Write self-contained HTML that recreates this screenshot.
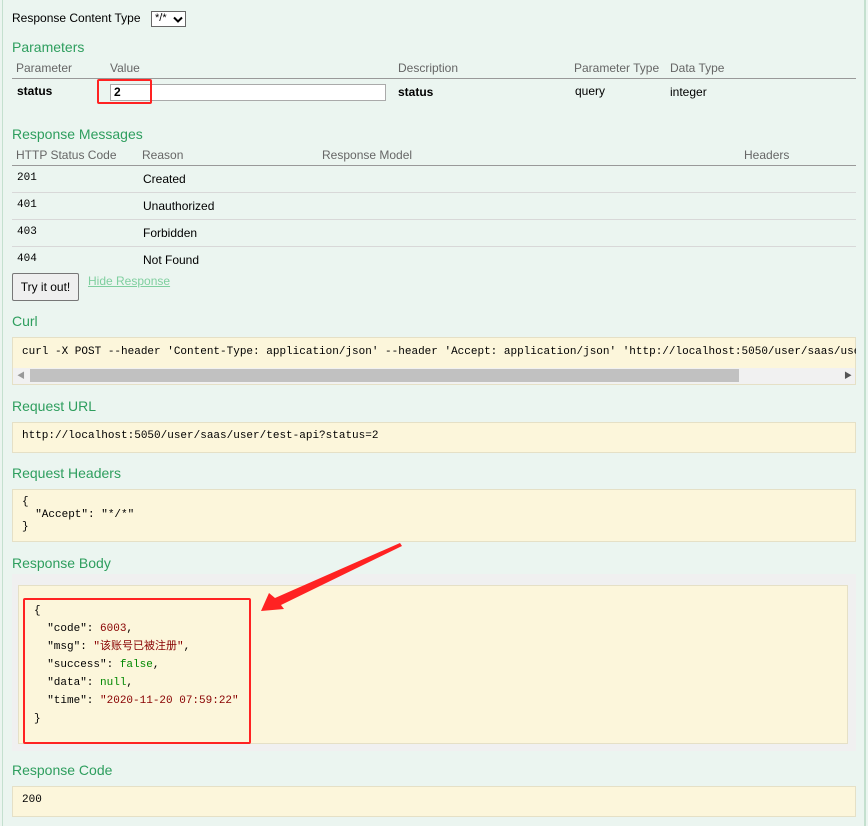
<!DOCTYPE html>
<html><head><meta charset="utf-8"><style>
*{margin:0;padding:0;box-sizing:border-box}
body{width:868px;height:826px;background:#ebf5f0;font-family:"Liberation Sans","Noto Sans CJK SC",sans-serif;font-size:12px;color:#000;position:relative;overflow:hidden}
.a{position:absolute;white-space:nowrap}
.h{color:#2e9e5e;font-size:14px}
.g{color:#666}
.m{font-family:"Liberation Mono","Noto Sans CJK SC",monospace;font-size:11px}
.box{position:absolute;left:12px;width:844px;background:#fcf6db;border:1px solid #e5e0c6}
.ln{position:absolute;left:12px;width:844px;height:1px;background:#d8d8d8}
</style></head><body>
<div class="a" style="left:2px;top:0;width:1px;height:826px;background:#c4e0cf"></div>
<div class="a" style="left:864px;top:0;width:2px;height:826px;background:#c4e0cf"></div>

<div class="a" style="left:12px;top:11px">Response Content Type</div>
<div class="a" style="left:151px;top:11px;width:35px;height:16px;border:1px solid #666;background:#fff;font-size:11px;padding-left:3px;line-height:13px">*/*<svg style="position:absolute;left:21px;top:4px" width="10" height="7"><path d="M1 1.5 L5 5.5 L9 1.5" stroke="#000" stroke-width="2" fill="none"/></svg></div>

<div class="a h" style="left:12px;top:39px">Parameters</div>
<div class="a g" style="left:16px;top:61px">Parameter</div>
<div class="a g" style="left:110px;top:61px">Value</div>
<div class="a g" style="left:398px;top:61px">Description</div>
<div class="a g" style="left:574px;top:61px">Parameter Type</div>
<div class="a g" style="left:670px;top:61px">Data Type</div>
<div class="ln" style="top:78px;background:#999"></div>
<div class="a" style="left:17px;top:84px;font-weight:bold">status</div>
<div class="a" style="left:110px;top:84px;width:276px;height:17px;background:#fff;border:1px solid #aaa;font-weight:bold;padding-left:3px;line-height:15px">2</div>
<div class="a" style="left:97px;top:79px;width:55px;height:25px;border:2px solid #f22;border-radius:2px"></div>
<div class="a" style="left:398px;top:85px;font-weight:bold">status</div>
<div class="a" style="left:575px;top:84px">query</div>
<div class="a" style="left:670px;top:85px">integer</div>

<div class="a h" style="left:12px;top:126px">Response Messages</div>
<div class="a g" style="left:16px;top:148px">HTTP Status Code</div>
<div class="a g" style="left:142px;top:148px">Reason</div>
<div class="a g" style="left:322px;top:148px">Response Model</div>
<div class="a g" style="left:744px;top:148px">Headers</div>
<div class="ln" style="top:165px;background:#999"></div>
<div class="a m" style="left:17px;top:172px">201</div><div class="a" style="left:143px;top:172px">Created</div>
<div class="ln" style="top:192px"></div>
<div class="a m" style="left:17px;top:199px">401</div><div class="a" style="left:143px;top:199px">Unauthorized</div>
<div class="ln" style="top:219px"></div>
<div class="a m" style="left:17px;top:226px">403</div><div class="a" style="left:143px;top:226px">Forbidden</div>
<div class="ln" style="top:246px"></div>
<div class="a m" style="left:17px;top:253px">404</div><div class="a" style="left:143px;top:253px">Not Found</div>

<div class="a" style="left:12px;top:273px;width:67px;height:28px;background:#efefef;border:1px solid #777;border-radius:2px;text-align:center;line-height:26px">Try it out!</div>
<div class="a" style="left:88px;top:274px;color:#7fcf9f;text-decoration:underline">Hide Response</div>

<div class="a h" style="left:12px;top:313px">Curl</div>
<div class="box" style="top:337px;height:48px"></div>
<div class="a m" style="left:22px;top:346px;width:834px;overflow:hidden">curl -X POST --header 'Content-Type: application/json' --header 'Accept: application/json' 'http://localhost:5050/user/saas/user/test-api?status=2'</div>
<div class="a" style="left:13px;top:368px;width:842px;height:16px;background:#f1f1f1"></div>
<div class="a" style="left:30px;top:369px;width:709px;height:13px;background:#c1c1c1"></div>
<div class="a" style="left:17px;top:370px;font-size:8px;color:#999">&#9664;</div>
<div class="a" style="left:844px;top:370px;font-size:8px;color:#555">&#9654;</div>

<div class="a h" style="left:12px;top:398px">Request URL</div>
<div class="box" style="top:422px;height:31px"></div>
<div class="a m" style="left:22px;top:430px">http://localhost:5050/user/saas/user/test-api?status=2</div>

<div class="a h" style="left:12px;top:465px">Request Headers</div>
<div class="box" style="top:489px;height:53px"></div>
<div class="a m" style="left:22px;top:496px;line-height:12.5px;white-space:pre">{
  "Accept": "*/*"
}</div>

<div class="a h" style="left:12px;top:555px">Response Body</div>
<div class="a" style="left:12px;top:574px;width:844px;height:177px;background:#f0f0f0"></div>
<div class="a" style="left:18px;top:585px;width:830px;height:159px;background:#fcf6db;border:1px solid #e5e0c6"></div>
<div class="a m" style="left:34px;top:602px;line-height:18px;white-space:pre">{
  "code": <span style="color:#800">6003</span>,
  "msg": <span style="color:#800">"该账号已被注册"</span>,
  "success": <span style="color:#080">false</span>,
  "data": <span style="color:#080">null</span>,
  "time": <span style="color:#800">"2020-11-20 07:59:22"</span>
}</div>
<div class="a" style="left:23px;top:598px;width:228px;height:146px;border:2px solid #f22;border-radius:2px"></div>
<svg class="a" style="left:0;top:0" width="868" height="826"><polygon points="400,543 402,546 281,605 284,609 261,611 269,593 275,598" fill="#f22"/></svg>

<div class="a h" style="left:12px;top:762px">Response Code</div>
<div class="box" style="top:786px;height:31px"></div>
<div class="a m" style="left:22px;top:794px">200</div>
</body></html>
